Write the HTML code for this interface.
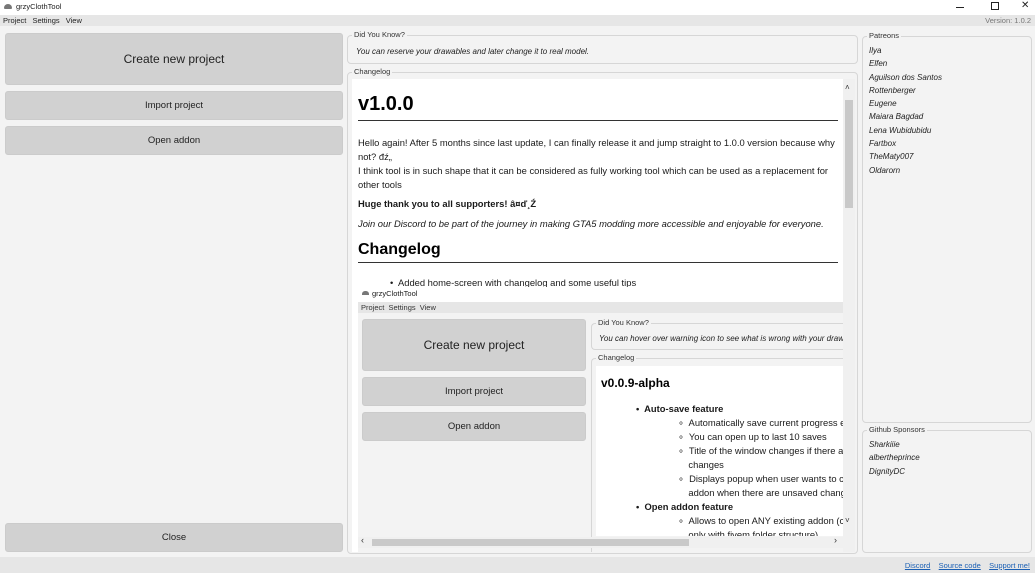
<!DOCTYPE html>
<html><head><meta charset="utf-8">
<style>
*{margin:0;padding:0;box-sizing:border-box}
body{width:1035px;height:573px;overflow:hidden;background:#f3f3f3;font-family:"Liberation Sans",sans-serif;color:#1a1a1a;position:relative}
.a{position:absolute}
.btn{position:absolute;background:#d1d1d1;border:1px solid #cbcbcb;border-radius:3px;display:flex;align-items:center;justify-content:center;color:#222}
.grp{position:absolute;border:1px solid #d6d6d6;border-radius:4px}
.lg{position:absolute;top:-6px;left:4px;background:#f3f3f3;padding:0 2px;font-size:7.5px;color:#333;white-space:nowrap}
.it{font-style:italic;font-size:8px;line-height:13.3px;color:#222;white-space:nowrap}
.t{font-size:9.4px;line-height:14px}
a{color:#1a5fb4;text-decoration:underline}
</style></head><body>
<div class="a" style="left:0;top:0;width:1035px;height:15px;background:#fff"></div>
<div class="a" style="left:4px;top:4px;width:8px;height:5px;background:#777;border-radius:4px 4px 1px 1px"></div>
<div class="a" style="left:16px;top:2px;font-size:7.5px;color:#222">grzyClothTool</div>
<div class="a" style="left:956px;top:7px;width:8px;height:1px;background:#222"></div>
<div class="a" style="left:991px;top:2px;width:8px;height:8px;border:1px solid #222"></div>
<div class="a" style="left:1021px;top:0;font-size:10px;color:#222">✕</div>
<div class="a" style="left:0;top:15px;width:1035px;height:11px;background:#e6e6e6"></div>
<div class="a" style="left:3px;top:16px;font-size:7.5px;color:#222;word-spacing:1px;white-space:nowrap">Project&nbsp; Settings&nbsp; View</div>
<div class="a" style="right:4px;top:16px;font-size:7.5px;color:#777">Version: 1.0.2</div>
<div class="btn" style="left:5px;top:33px;width:338px;height:52px;font-size:12px">Create new project</div>
<div class="btn" style="left:5px;top:91px;width:338px;height:29px;font-size:9.5px">Import project</div>
<div class="btn" style="left:5px;top:126px;width:338px;height:29px;font-size:9.5px">Open addon</div>
<div class="btn" style="left:5px;top:523px;width:338px;height:29px;font-size:9.5px">Close</div>
<div class="grp" style="left:347px;top:35px;width:511px;height:29px"><div class="lg">Did You Know?</div>
<div class="a it" style="left:8px;top:9px">You can reserve your drawables and later change it to real model.</div></div>
<div class="grp" style="left:347px;top:72px;width:511px;height:482px"><div class="lg">Changelog</div></div>
<div class="a" style="left:352px;top:79px;width:491px;height:473px;background:#fff;overflow:hidden">
 <div class="a" style="left:6px;top:14px;font-size:20px;font-weight:bold;color:#000">v1.0.0</div>
 <div class="a" style="left:6px;top:41px;width:480px;border-top:1px solid #333"></div>
 <div class="a t" style="left:6px;top:57px;width:480px">Hello again! After 5 months since last update, I can finally release it and jump straight to 1.0.0 version because why not? đź„<br>I think tool is in such shape that it can be considered as fully working tool which can be used as a replacement for other tools</div>
 <div class="a t" style="left:6px;top:118px;font-weight:bold">Huge thank you to all supporters! â¤ď¸Ź</div>
 <div class="a t" style="left:6px;top:138px;font-style:italic">Join our Discord to be part of the journey in making GTA5 modding more accessible and enjoyable for everyone.</div>
 <div class="a" style="left:6px;top:162px;font-size:16px;font-weight:bold;color:#000">Changelog</div>
 <div class="a" style="left:6px;top:183px;width:480px;border-top:1px solid #333"></div>
 <div class="a t" style="left:38px;top:197px">•&nbsp; Added home-screen with changelog and some useful tips</div>
 <div class="a" style="left:341px;top:210px;width:21px;height:2px;background:#111"></div>
 <div class="a" style="left:6px;top:208px;width:485px;height:265px;background:#fff">
  <div class="a" style="left:4px;top:4px;width:7px;height:4px;background:#777;border-radius:3px 3px 0 0"></div>
  <div class="a" style="left:14px;top:2px;font-size:7.5px">grzyClothTool</div>
  <div class="a" style="left:0;top:15px;width:485px;height:11px;background:#e6e6e6"></div>
  <div class="a" style="left:3px;top:16px;font-size:7.5px;color:#333;white-space:nowrap">Project&nbsp; Settings&nbsp; View</div>
  <div class="a" style="left:0;top:26px;width:485px;height:239px;background:#f3f3f3"></div>
  <div class="btn" style="left:4px;top:32px;width:224px;height:52px;font-size:12px">Create new project</div>
  <div class="btn" style="left:4px;top:90px;width:224px;height:29px;font-size:9.5px">Import project</div>
  <div class="btn" style="left:4px;top:125px;width:224px;height:29px;font-size:9.5px">Open addon</div>
  <div class="grp" style="left:233px;top:36px;width:260px;height:27px;border-right:none"><div class="lg">Did You Know?</div>
   <div class="a it" style="left:7px;top:8px">You can hover over warning icon to see what is wrong with your draw</div></div>
  <div class="grp" style="left:233px;top:71px;width:260px;height:200px;border-right:none"><div class="lg">Changelog</div></div>
  <div class="a" style="left:238px;top:79px;width:247px;height:170px;background:#fff;overflow:hidden">
   <div class="a" style="left:5px;top:10px;font-size:12px;font-weight:bold;color:#000">v0.0.9-alpha</div>
   <div class="a t" style="left:40px;top:36px;white-space:nowrap"><b>•&nbsp; Auto-save feature</b></div>
   <div class="a t" style="left:82px;top:50px;white-space:nowrap">∘&nbsp; Automatically save current progress ev</div>
   <div class="a t" style="left:82px;top:64px;white-space:nowrap">∘&nbsp; You can open up to last 10 saves</div>
   <div class="a t" style="left:82px;top:78px;white-space:nowrap">∘&nbsp; Title of the window changes if there are<br>&nbsp;&nbsp;&nbsp;&nbsp;changes</div>
   <div class="a t" style="left:82px;top:106px;white-space:nowrap">∘&nbsp; Displays popup when user wants to clo<br>&nbsp;&nbsp;&nbsp;&nbsp;addon when there are unsaved change:</div>
   <div class="a t" style="left:40px;top:134px;white-space:nowrap"><b>•&nbsp; Open addon feature</b></div>
   <div class="a t" style="left:82px;top:148px;white-space:nowrap">∘&nbsp; Allows to open ANY existing addon (cu<br>&nbsp;&nbsp;&nbsp;&nbsp;only with fivem folder structure)</div>
  </div>
 </div>
 <div class="a" style="left:6px;top:458px;width:485px;height:11px;background:#f0f0f0"></div>
 <div class="a" style="left:20px;top:460px;width:317px;height:7px;background:#c9c9c9"></div>
 <div class="a" style="left:9px;top:456px;font-size:9px;color:#333">‹</div>
 <div class="a" style="left:482px;top:456px;font-size:9px;color:#333">›</div>
</div>
<div class="a" style="left:843px;top:79px;width:12px;height:473px;background:#f0f0f0"></div>
<div class="a" style="left:845px;top:100px;width:8px;height:108px;background:#c9c9c9"></div>
<div class="a" style="left:845px;top:83px;font-size:8px;color:#333">˄</div>
<div class="a" style="left:845px;top:516px;font-size:8px;color:#333">˅</div>
<div class="grp" style="left:862px;top:36px;width:170px;height:387px"><div class="lg">Patreons</div>
 <div class="a it" style="left:6px;top:7px">Ilya<br>Elfen<br>Aguilson dos Santos<br>Rottenberger<br>Eugene<br>Maiara Bagdad<br>Lena Wubidubidu<br>Fartbox<br>TheMaty007<br>Oldarorn</div></div>
<div class="grp" style="left:862px;top:430px;width:170px;height:123px"><div class="lg">Github Sponsors</div>
 <div class="a it" style="left:6px;top:7px">Sharkiiie<br>albertheprince<br>DignityDC</div></div>
<div class="a" style="left:0;top:557px;width:1035px;height:16px;background:#e6e6e6"></div>
<div class="a" style="right:5px;top:561px;font-size:7.5px;white-space:nowrap"><a>Discord</a>&nbsp;&nbsp;&nbsp; <a>Source code</a>&nbsp;&nbsp;&nbsp; <a>Support me!</a></div>
</body></html>
